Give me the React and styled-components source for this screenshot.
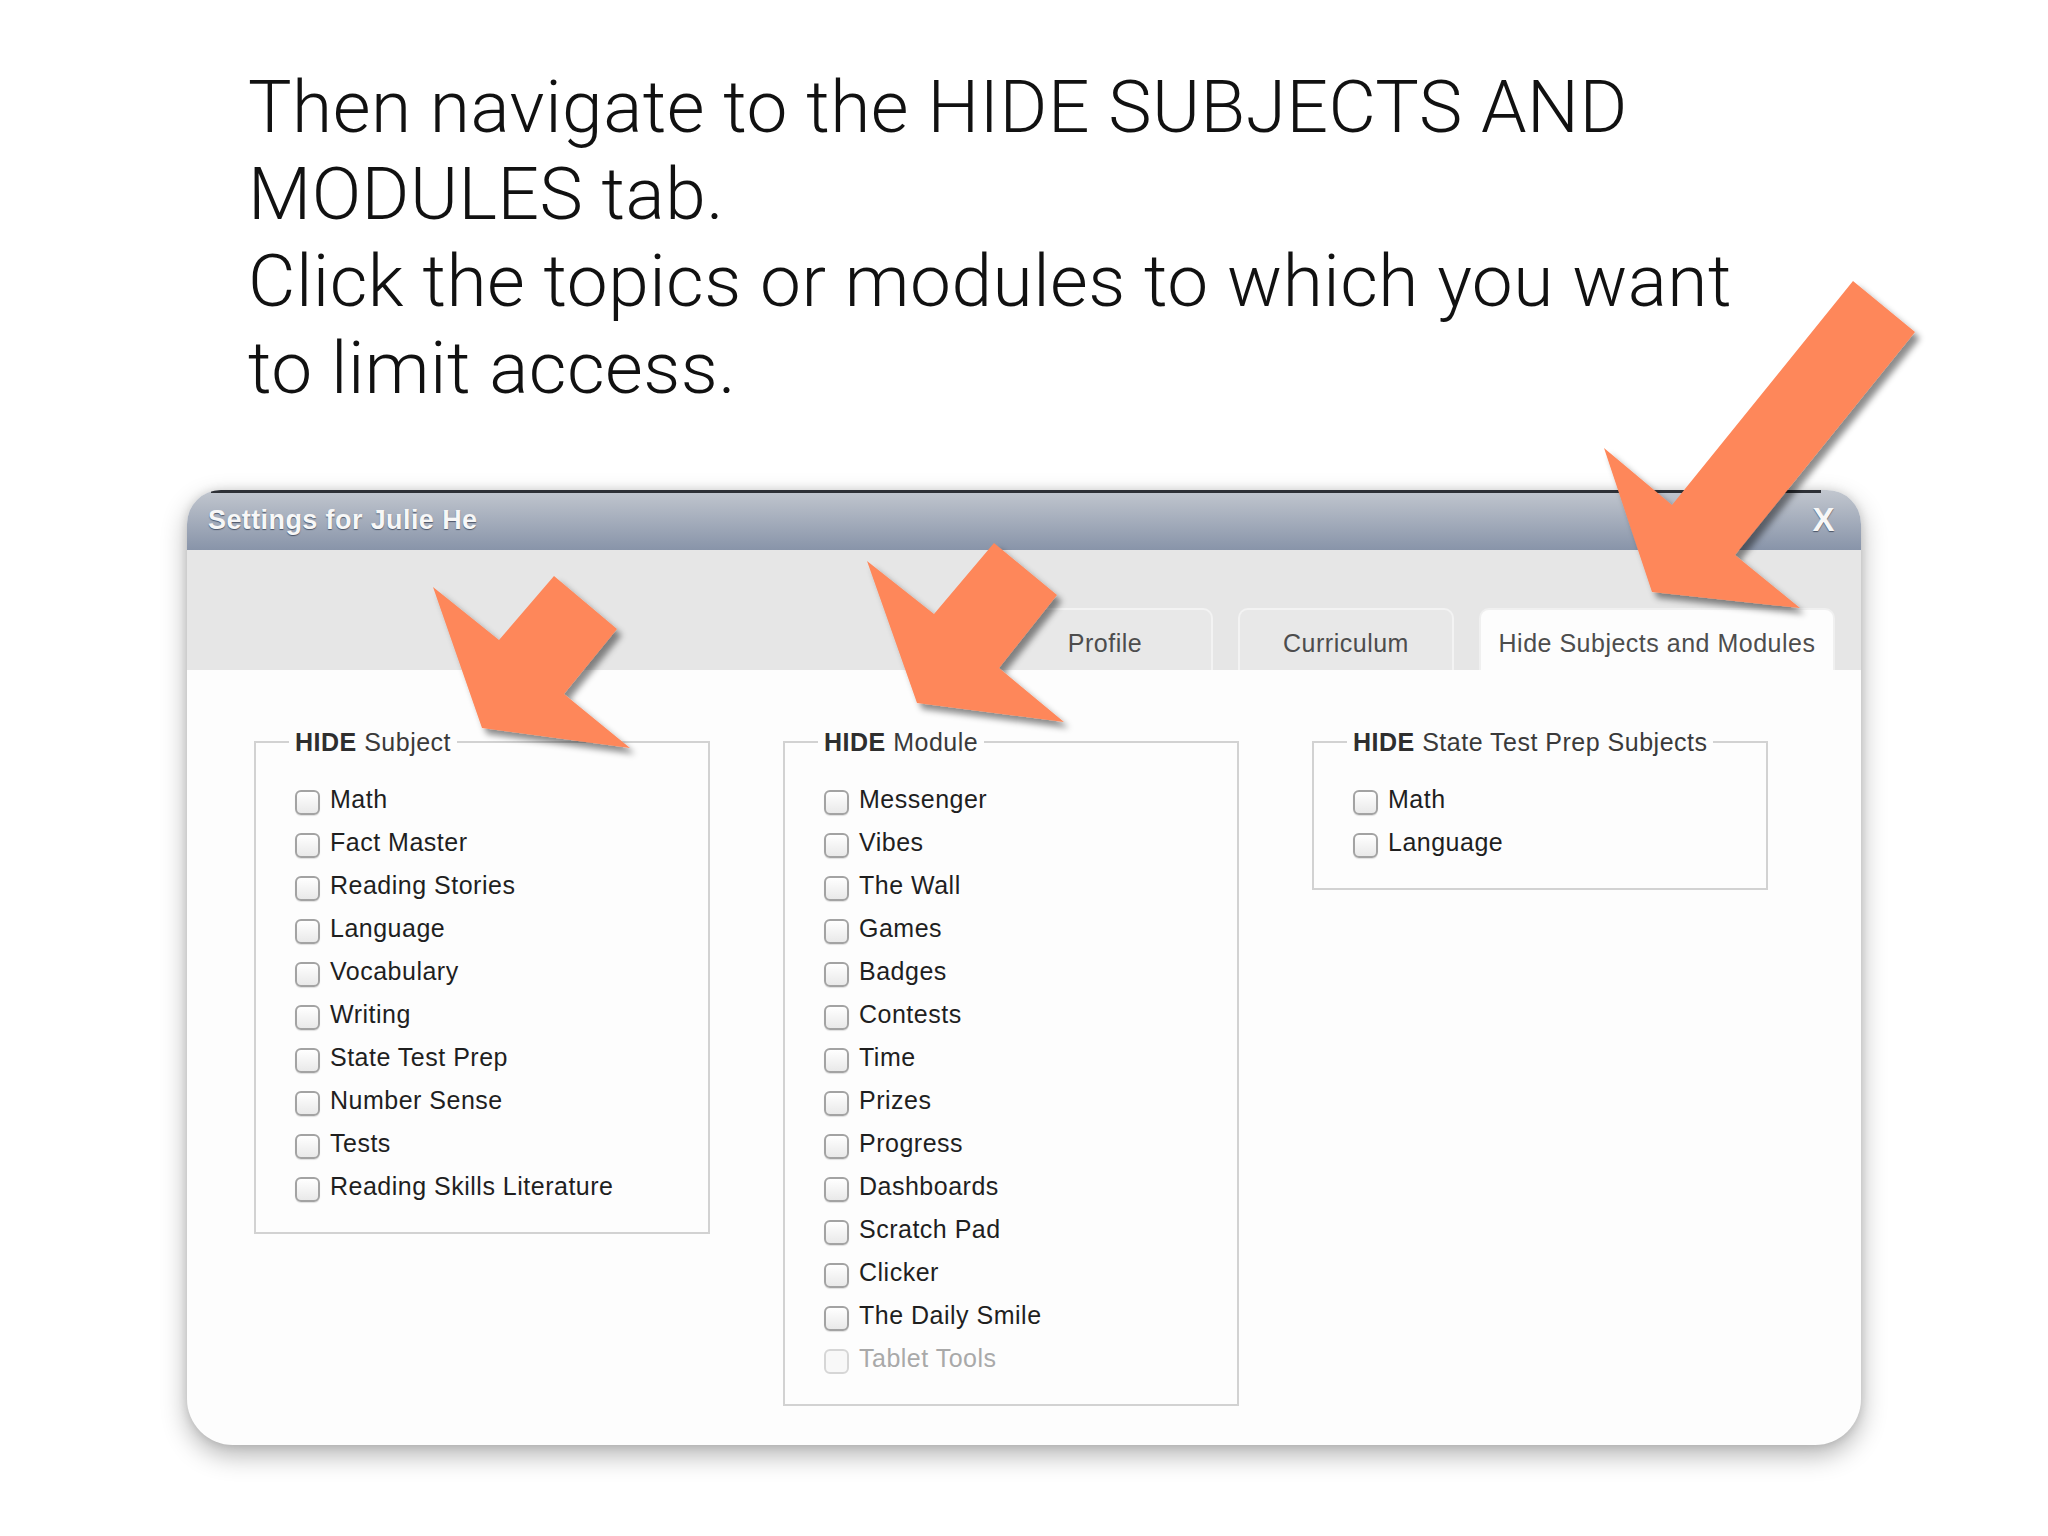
import React from "react";
import styled, { createGlobalStyle } from "styled-components";

const subjects = [
  "Math",
  "Fact Master",
  "Reading Stories",
  "Language",
  "Vocabulary",
  "Writing",
  "State Test Prep",
  "Number Sense",
  "Tests",
  "Reading Skills Literature",
];

const modules = [
  "Messenger",
  "Vibes",
  "The Wall",
  "Games",
  "Badges",
  "Contests",
  "Time",
  "Prizes",
  "Progress",
  "Dashboards",
  "Scratch Pad",
  "Clicker",
  "The Daily Smile",
];

const arrows = [
  "433,587 499,640 554,576 617,629 564,694 630,748 482,728",
  "867,561 934,614 994,543 1057,595 999,668 1064,722 917,703",
  "1604,448 1672,505 1853,281 1915,332 1735,555 1800,608 1652,592",
];

const App = () => {
  return (
    <Page>
      <GlobalStyle />
      <Heading>
        Then navigate to the HIDE SUBJECTS AND
        <br />
        MODULES tab.
        <br />
        Click the topics or modules to which you want
        <br />
        to limit access.
      </Heading>

      <Dialog>
        <TitleBar>
          <span>Settings for Julie He</span>
          <Close>X</Close>
        </TitleBar>
        <Tabs>
          <Tab>Profile</Tab>
          <Tab>Curriculum</Tab>
          <Tab active wide>
            Hide Subjects and Modules
          </Tab>
        </Tabs>
        <Content>
          <Group>
            <legend>
              <b>HIDE</b> Subject
            </legend>
            {subjects.map((s) => (
              <Item key={s}>
                <Box type="checkbox" />
                {s}
              </Item>
            ))}
          </Group>
          <Group>
            <legend>
              <b>HIDE</b> Module
            </legend>
            {modules.map((m) => (
              <Item key={m}>
                <Box type="checkbox" />
                {m}
              </Item>
            ))}
            <Item disabled>
              <Box type="checkbox" disabled />
              Tablet Tools
            </Item>
          </Group>
          <Group>
            <legend>
              <b>HIDE</b> State Test Prep Subjects
            </legend>
            <Item>
              <Box type="checkbox" />
              Math
            </Item>
            <Item>
              <Box type="checkbox" />
              Language
            </Item>
          </Group>
        </Content>
      </Dialog>

      <Arrows viewBox="0 0 2048 1536">
        <defs>
          <filter id="arrowShadow" x="-20%" y="-20%" width="140%" height="140%">
            <feDropShadow dx="5" dy="6" stdDeviation="3" floodColor="#000" floodOpacity="0.45" />
          </filter>
        </defs>
        {arrows.map((pts) => (
          <polygon key={pts} points={pts} fill="#fe875a" filter="url(#arrowShadow)" />
        ))}
      </Arrows>
    </Page>
  );
};

const GlobalStyle = createGlobalStyle`
  body {
    margin: 0;
    background: #fff;
  }
`;

const Page = styled.div`
  position: relative;
  width: 2048px;
  height: 1536px;
  overflow: hidden;
  background: #fff;
  font-family: "Liberation Sans", Arial, sans-serif;
`;

const Heading = styled.h1`
  margin: 0;
  padding: 64px 0 0 248px;
  font-family: Roboto, "Liberation Sans", sans-serif;
  font-weight: 300;
  font-size: 73px;
  line-height: 87px;
  letter-spacing: 0.5px;
  color: #111;
`;

const Dialog = styled.section`
  width: 1674px;
  margin: 78px 0 0 187px;
  border-radius: 34px 34px 46px 46px;
  background: #fdfdfd;
  box-shadow: 0 10px 26px rgba(0, 0, 0, 0.3), 0 0 10px rgba(0, 0, 0, 0.12);
  overflow: hidden;
`;

const TitleBar = styled.header`
  position: relative;
  height: 60px;
  display: flex;
  align-items: center;
  justify-content: space-between;
  padding: 0 26px 0 21px;
  background: linear-gradient(#c2c7cf, #8894a9);
  color: #f7f7f7;
  font-weight: bold;
  font-size: 27px;
  letter-spacing: 0.4px;
  text-shadow: 0 1px 1px rgba(40, 50, 70, 0.7);
  &::before {
    content: "";
    position: absolute;
    top: 0;
    left: 24px;
    right: 40px;
    height: 3px;
    background: #2d3036;
  }
`;

const Close = styled.span`
  font-size: 33px;
`;

const Tabs = styled.nav`
  height: 120px;
  display: flex;
  justify-content: flex-end;
  align-items: flex-end;
  gap: 25px;
  padding-right: 26px;
  background: #e6e6e6;
`;

const Tab = styled.div`
  width: ${(p) => (p.wide ? "356px" : "216px")};
  height: 62px;
  box-sizing: border-box;
  display: flex;
  align-items: center;
  justify-content: center;
  padding-top: 7px;
  border: 2px solid ${(p) => (p.active ? "#f0f0f0" : "#f3f3f3")};
  border-bottom: none;
  border-radius: 10px 10px 0 0;
  background: ${(p) => (p.active ? "#fdfdfd" : "#e8e8e8")};
  color: #4d4d4d;
  font-size: 25px;
  letter-spacing: 0.5px;
`;

const Content = styled.div`
  display: flex;
  align-items: flex-start;
  gap: 73px;
  padding: 57px 0 39px 67px;
`;

const Group = styled.fieldset`
  width: 456px;
  box-sizing: border-box;
  margin: 0;
  padding: 21px 0 24px 39px;
  border: 2px solid #d2d2d2;
  legend {
    margin-left: -6px;
    padding: 0 6px;
    line-height: 30px;
    font-size: 25px;
    letter-spacing: 0.5px;
    color: #3a3a3a;
  }
  b {
    color: #2e2e2e;
  }
`;

const Item = styled.label`
  display: flex;
  align-items: center;
  gap: 10px;
  height: 43px;
  font-size: 25px;
  letter-spacing: 0.5px;
  color: ${(p) => (p.disabled ? "#a9a9a9" : "#1f1f1f")};
`;

const Box = styled.input`
  appearance: none;
  width: 25px;
  height: 25px;
  margin: 6px 0 0;
  box-sizing: border-box;
  border: 2px solid ${(p) => (p.disabled ? "#d6d6d6" : "#a3a3a3")};
  border-radius: 6px;
  background: ${(p) =>
    p.disabled ? "#f8f8f8" : "linear-gradient(#ffffff, #e9e9e9)"};
  box-shadow: ${(p) => (p.disabled ? "none" : "0 1px 1px rgba(0,0,0,0.12)")};
`;

const Arrows = styled.svg`
  position: absolute;
  left: 0;
  top: 0;
  width: 2048px;
  height: 1536px;
  pointer-events: none;
`;

export default App;
